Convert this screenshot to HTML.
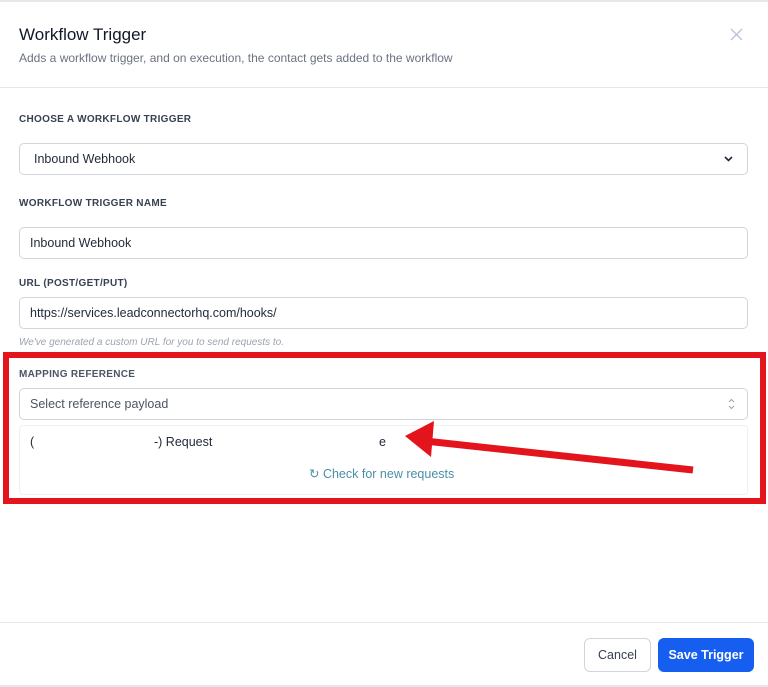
<!DOCTYPE html>
<html><head><style>
*{box-sizing:border-box;margin:0;padding:0}
body{width:768px;height:687px;background:#fff;font-family:"Liberation Sans",sans-serif;position:relative;overflow:hidden;color:#374151}
.a{position:absolute}
.lbl{font-size:10px;font-weight:bold;color:#374151;letter-spacing:.3px}
.inp{border:1px solid #d1d5db;border-radius:5px;height:32px;left:19px;width:729px;font-size:12.5px;padding:0 10px;line-height:30px;color:#1f2937}
</style></head><body>
<div class="a" style="left:0;top:0;width:768px;height:2px;background:#e5e7eb"></div>
<div class="a" style="left:19px;top:25px;font-size:17px;color:#111827">Workflow Trigger</div>
<div class="a" style="left:19px;top:51px;font-size:12px;color:#6b7280">Adds a workflow trigger, and on execution, the contact gets added to the workflow</div>
<svg class="a" style="left:730px;top:28px" width="13" height="13"><path d="M1 1L12 12M12 1L1 12" stroke="#b6c2d6" stroke-width="1.3"/></svg>
<div class="a" style="left:0;top:87px;width:768px;height:1px;background:#e5e7eb"></div>
<div class="a lbl" style="left:19px;top:114px">CHOOSE A WORKFLOW TRIGGER</div>
<div class="a inp" style="top:143px;padding-left:14px">Inbound Webhook<svg style="position:absolute;right:14px;top:12px" width="9" height="6"><path d="M1 1L4.5 4.5L8 1" stroke="#1f2937" stroke-width="1.6" fill="none"/></svg></div>
<div class="a lbl" style="left:19px;top:198px">WORKFLOW TRIGGER NAME</div>
<div class="a inp" style="top:227px">Inbound Webhook</div>
<div class="a lbl" style="left:19px;top:278px">URL (POST/GET/PUT)</div>
<div class="a inp" style="top:297px">https://services.leadconnectorhq.com/hooks/</div>
<div class="a" style="left:19px;top:337px;font-size:10px;color:#9ca3af;font-style:italic">We've generated a custom URL for you to send requests to.</div>
<div class="a lbl" style="left:19px;top:369px;color:#4b5563">MAPPING REFERENCE</div>
<div class="a inp" style="top:388px;color:#4b5563">Select reference payload<svg style="position:absolute;right:12px;top:9px" width="7" height="12"><path d="M1 4L3.5 1.5L6 4M1 8L3.5 10.5L6 8" stroke="#9ca3af" stroke-width="1" fill="none"/></svg></div>
<div class="a" style="left:19px;top:425px;width:729px;height:70px;border:1px solid #eef0f3;border-radius:4px"></div>
<div class="a" style="left:30px;top:435px;font-size:12.5px;color:#1f2937">(</div>
<div class="a" style="left:154px;top:435px;font-size:12.5px;color:#1f2937">-) Request</div>
<div class="a" style="left:379px;top:435px;font-size:12.5px;color:#1f2937">e</div>
<div class="a" style="left:309px;top:466px;font-size:12.5px;color:#4b8fa6">↻ Check for new requests</div>
<div class="a" style="left:3px;top:352px;width:763px;height:152px;border:6px solid #e3141b"></div>
<svg class="a" style="left:0;top:0" width="768" height="687"><line x1="425" y1="441" x2="693" y2="470" stroke="#e3141b" stroke-width="7"/><polygon points="405,436 434,421 431,457" fill="#e3141b"/></svg>
<div class="a" style="left:0;top:622px;width:768px;height:1px;background:#e5e7eb"></div>
<div class="a" style="left:584px;top:638px;width:67px;height:34px;border:1px solid #d1d5db;border-radius:6px;font-size:12.5px;text-align:center;line-height:32px;color:#374151">Cancel</div>
<div class="a" style="left:658px;top:638px;width:96px;height:34px;background:#155eef;border-radius:6px;font-size:12.5px;font-weight:bold;text-align:center;line-height:34px;color:#fff">Save Trigger</div>
<div class="a" style="left:0;top:685px;width:768px;height:2px;background:#e5e7eb"></div>
</body></html>
